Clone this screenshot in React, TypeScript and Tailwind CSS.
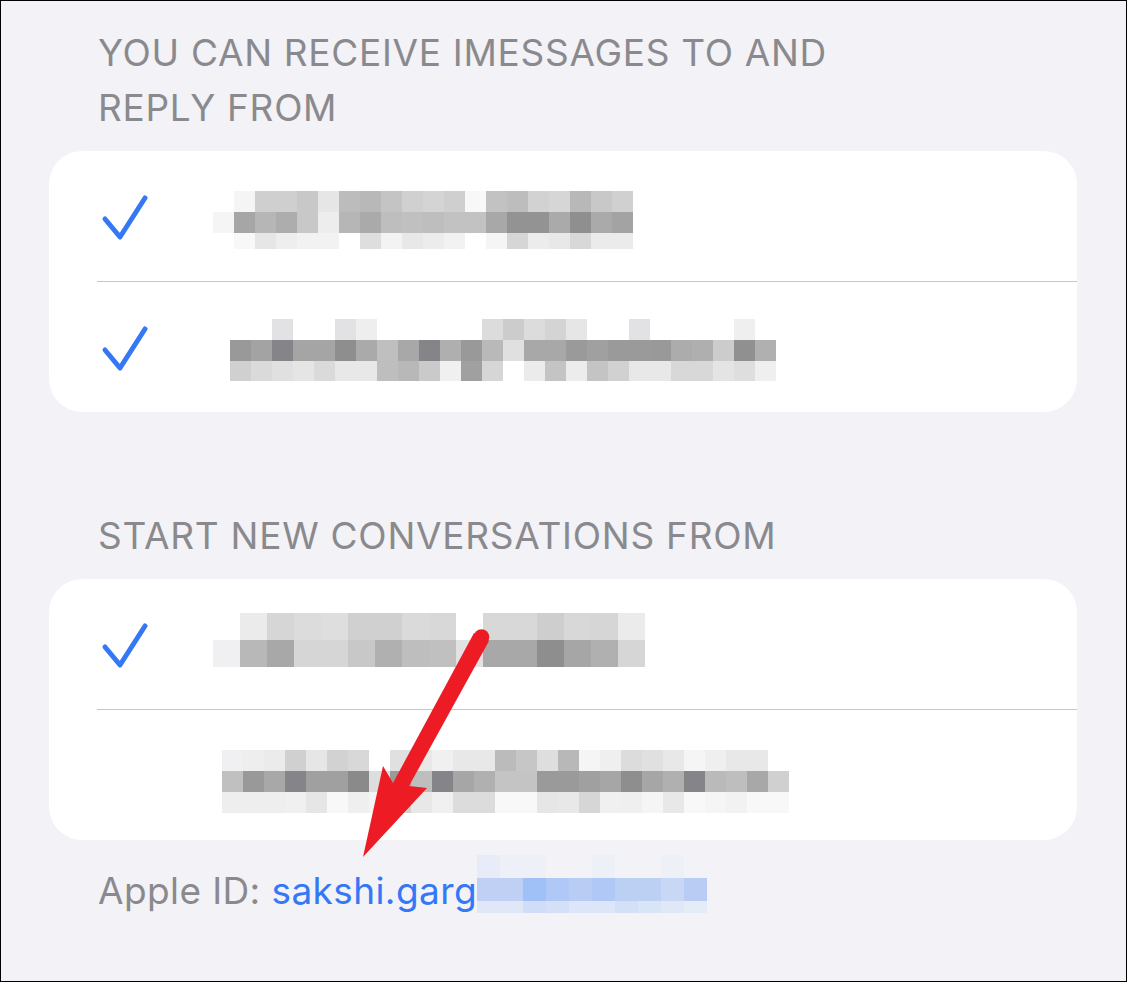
import React from "react";

type MRow = { y: number; h: number; x0: number; cells: (string | null)[] };

// short grey codes ("cf") expand to "#cfcfcf"; longer codes are full hex
const hex = (c: string) => (c.length === 2 ? `#${c}${c}${c}` : `#${c}`);

function Mosaic({
  w,
  h,
  cw,
  rows,
  className,
}: {
  w: number;
  h: number;
  cw: number;
  rows: MRow[];
  className?: string;
}) {
  return (
    <svg width={w} height={h} viewBox={`0 0 ${w} ${h}`} shapeRendering="crispEdges" className={className}>
      {rows.map((r, ri) =>
        r.cells.map((c, ci) =>
          c ? <rect key={`${ri}-${ci}`} x={r.x0 + ci * cw} y={r.y} width={cw} height={r.h} fill={hex(c)} /> : null
        )
      )}
    </svg>
  );
}

function Check({ className }: { className?: string }) {
  return (
    <svg width="50" height="50" viewBox="0 0 50 50" className={className}>
      <path d="M5 26 L20 44 L45 5" fill="none" stroke="#3478f6" strokeWidth="5" strokeLinecap="round" strokeLinejoin="round" />
    </svg>
  );
}

const rowA: MRow[] = [
  { y: 0, h: 21, x0: 21, cells: ["f5", "cf", "cf", "c8", "e6", "bc", "b8", "c4", "d0", "d4", "cf", "f8", "c2", "bd", "d2", "d6", "b8", "c8", "d0"] },
  { y: 21, h: 21, x0: 0, cells: ["f5", "a6", "b6", "ad", "c8", "ed", "b6", "aa", "be", "c0", "be", "c2", "c2", "a8", "93", "93", "aa", "8f", "aa", "a3"] },
  { y: 42, h: 16, x0: 21, cells: ["f8", "e6", "ee", "f2", "f2", null, "de", "f3", "e8", "ec", "f2", null, "f5", "d6", "ec", "e8", "d8", "eb", "eb"] },
];

const rowB: MRow[] = [
  {
    y: 0,
    h: 21,
    x0: 0,
    cells: [null, null, "e2e2e4", null, null, "e2e2e4", "ee", null, null, null, null, null, "dc", "cc", "dc", "d4", "e6", null, null, "e2e2e4", null, null, null, null, "ef"],
  },
  { y: 21, h: 21, x0: 0, cells: ["99", "a3", "858589", "a5", "a5", "8e", "aa", "bf", "a8", "858589", "af", "99", "b9", "e0", "a8", "a8", "9a", "a0", "9a", "9a", "99", "ac", "af", "cc", "90", "b0"] },
  { y: 42, h: 20, x0: 0, cells: ["d0", "da", "e0", "e5", "da", "e8", "e8", "be", "b8", "ca", "f0", "a0", "d6", null, "eb", "c4", "ec", "c4", "d1", "e8", "e8", "d8", "d8", "e4", "de", "ef"] },
];

const rowC: MRow[] = [
  { y: 0, h: 27, x0: 27, cells: ["eb", "d6", "dc", "de", "d0", "d0", "da", "d8", null, "d8", "d8", "ce", "d8", "d6", "eb"] },
  { y: 27, h: 27, x0: 0, cells: ["f0f0f2", "b8", "a8", "d6", "d6", "c8", "b0", "be", "c0", "e2", "a8", "a8", "8e", "a6", "b0", "d6"] },
];

const rowD: MRow[] = [
  { y: 0, h: 21, x0: 0, cells: ["f0f0f2", "ee", "eb", "d0", "e6", "d2", "d8", null, "e0", "e8", "f0", "e8", "e8", "bb", "c6", "de", "b8", "f5", "ef", "dc", "e0", "e8", "f5", "ef", "e8", "e8"] },
  { y: 21, h: 21, x0: 0, cells: ["c0", "99", "a8", "858589", "a0", "a0", "8a", "de", "9a", "be", "858589", "a6", "b0", "c4", "c4", "9a", "9a", "a0", "a6", "8e", "a6", "b0", "858589", "ba", "be", "a8", "d0"] },
  { y: 42, h: 21, x0: 0, cells: ["ee", "ee", "ee", "f0", "e6", "f8", "ef", "f5", "d0", "e8", "f0", "dc", "dc", "f8", "f8", "e6", "e8", "d6", "f0", "ef", "f5", "e8", "f8", "f5", "f2", "f8", "f8"] },
];

const rowE: MRow[] = [
  { y: 0, h: 23, x0: 0, cells: ["e8ecf8", "eef0f8", "eef0f8", null, null, "eef0f8", null, null, "eef0f8", null] },
  { y: 23, h: 23, x0: 0, cells: ["c0d0f4", "c0d0f4", "a0c0f8", "b0c8f6", "b8ccf4", "b0c8f6", "bcd0f4", "bcd0f4", "c8d8f4", "b8ccf4"] },
  { y: 46, h: 12, x0: 0, cells: ["e0e8f8", "e0e8f8", "d0dcf8", "d4e0f8", "dce6f8", "dce6f8", "d4e0f8", "d8e4f8", "e0e8f8", "e4ecf8"] },
];

const Separator = () => <div className="ml-[48px] h-px bg-[#c6c6c8]" />;

export default function App() {
  return (
    <div className="relative h-[982px] w-[1127px] overflow-hidden border border-black bg-[#f2f2f7] font-['Inter',sans-serif]">
      <div className="px-[48px] pt-[24px]">
        <h2 className="pl-[49px] text-[37px] leading-[55px] font-normal tracking-[0.7px] text-[#8a8a8e]">
          YOU CAN RECEIVE IMESSAGES TO AND
          <br />
          REPLY FROM
        </h2>

        <div className="mt-[16px] w-[1028px] overflow-hidden rounded-[33px] bg-white">
          <div className="flex h-[130px] items-start">
            <Check className="ml-[51px] mt-[42px] shrink-0" />
            <Mosaic w={420} h={58} cw={21} rows={rowA} className="ml-[63px] mt-[40px]" />
          </div>
          <Separator />
          <div className="flex h-[130px] items-start">
            <Check className="ml-[51px] mt-[42px] shrink-0" />
            <Mosaic w={546} h={62} cw={21} rows={rowB} className="ml-[80px] mt-[37px]" />
          </div>
        </div>

        <h2 className="mt-[96px] pl-[49px] text-[37px] leading-[55px] font-normal tracking-[0.75px] text-[#8a8a8e]">
          START NEW CONVERSATIONS FROM
        </h2>

        <div className="mt-[16px] w-[1028px] overflow-hidden rounded-[33px] bg-white">
          <div className="flex h-[130px] items-start">
            <Check className="ml-[51px] mt-[42px] shrink-0" />
            <Mosaic w={432} h={54} cw={27} rows={rowC} className="ml-[63px] mt-[34px]" />
          </div>
          <Separator />
          <div className="flex h-[130px] items-start">
            <Mosaic w={567} h={63} cw={21} rows={rowD} className="ml-[173px] mt-[40px]" />
          </div>
        </div>

        <div className="mt-[23px] flex items-start pl-[49px] text-[37px] leading-[55px] tracking-[0.4px]">
          <span className="whitespace-pre text-[#8a8a8e]">Apple ID: </span>
          <span className="text-[#3478f6]">sakshi.garg</span>
          <Mosaic w={230} h={58} cw={23} rows={rowE} className="-mt-[8px] shrink-0" />
        </div>
      </div>

      {/* red annotation arrow drawn over the page */}
      <svg
        width="1127"
        height="982"
        viewBox="0 0 1127 982"
        className="pointer-events-none absolute left-[-1px] top-[-1px]"
      >
        <path d="M474 633 L393 783 L383 766 L363 857 L427 788 L409 786 L489 641 Z" fill="#ed1c24" />
        <circle cx="481.5" cy="637" r="7.8" fill="#ed1c24" />
      </svg>
    </div>
  );
}
